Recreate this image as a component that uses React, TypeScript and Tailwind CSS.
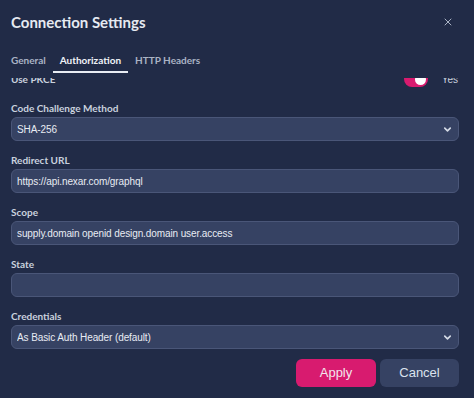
import { useLayoutEffect, useRef } from "react";
import { X, ChevronDown } from "lucide-react";

const sans = { fontFamily: "'Liberation Sans', Arial, sans-serif" };
const label = "block text-[10px] leading-[14px] font-bold text-[#c9d1de] mb-[2px]";
const field =
  "block w-full h-[24px] rounded-[6px] bg-[#364263] border border-[#4a5678] px-[5px] text-[10px] tracking-[-0.1px] text-[#e8ecf3] outline-none";

function TextField({ name, value }: { name: string; value: string }) {
  return (
    <div className="mb-[12px]">
      <label className={label}>{name}</label>
      <input className={field} style={sans} defaultValue={value} />
    </div>
  );
}

function SelectField({ name, value }: { name: string; value: string }) {
  return (
    <div className="mb-[12px]">
      <label className={label}>{name}</label>
      <div className="relative">
        <select className={`${field} appearance-none`} style={sans} defaultValue={value}>
          <option>{value}</option>
        </select>
        <ChevronDown
          size={11}
          strokeWidth={3.5}
          className="absolute right-[6px] top-[7px] text-[#d5dbe6] pointer-events-none"
        />
      </div>
    </div>
  );
}

export default function App() {
  const scrollRef = useRef<HTMLDivElement>(null);

  // the dialog body is scrolled a little, so "Use PKCE" is cut at the top
  useLayoutEffect(() => {
    if (scrollRef.current) scrollRef.current.scrollTop = 9;
  }, []);

  return (
    <div
      className="h-[398px] w-[474px] bg-[#212b47] flex flex-col overflow-hidden"
      style={{ fontFamily: "Lato, 'Liberation Sans', sans-serif" }}
    >
      <div className="flex items-center justify-between h-[24px] mt-[10px] pl-[11px] pr-[20px]">
        <h1 className="text-[15px] font-bold text-[#e6eaf1] leading-[24px]">Connection Settings</h1>
        <X size={12} strokeWidth={2} className="text-[#aab3c5]" />
      </div>

      <div className="flex mt-[14px] mb-[5px] ml-[4px] text-[10px] font-bold">
        <button className="h-[25px] px-[7px] pt-px leading-[16px] border-b-2 border-transparent text-[#aab3c5]">
          General
        </button>
        <button className="h-[25px] px-[7px] pt-px leading-[16px] border-b-2 border-[#e8ecf3] text-[#f0f3f8]">
          Authorization
        </button>
        <button className="h-[25px] px-[7px] pt-px leading-[16px] border-b-2 border-transparent text-[#aab3c5]">
          HTTP Headers
        </button>
      </div>

      <div ref={scrollRef} className="flex-1 overflow-hidden pl-[11px] pr-[15px]">
        <div className="pb-4">
          <div className="flex items-center h-[20px] mb-[12px]">
            <span className="text-[10px] font-bold text-[#c9d1de] flex-1">Use PKCE</span>
            <div className="w-[24px] h-[16px] rounded-full bg-[#d81b6f] flex items-center justify-end pr-[2px]">
              <div className="w-[11px] h-[11px] rounded-full bg-white" />
            </div>
            <span className="ml-[14px] mr-[1px] text-[10px] text-[#c9d1de]" style={sans}>
              Yes
            </span>
          </div>

          <SelectField name="Code Challenge Method" value="SHA-256" />
          <TextField name="Redirect URL" value="https://api.nexar.com/graphql" />
          <TextField name="Scope" value="supply.domain openid design.domain user.access" />
          <TextField name="State" value="" />
          <SelectField name="Credentials" value="As Basic Auth Header (default)" />
        </div>
      </div>

      <div className="flex justify-end gap-[4px] pt-[6px] pb-[11px] pr-[15px]" style={sans}>
        <button className="w-[80px] h-[28px] rounded-[6px] bg-[#d81b6f] text-[13px] text-[#f3e6ee]">
          Apply
        </button>
        <button className="w-[79px] h-[28px] rounded-[6px] bg-[#364263] text-[13px] text-[#dbe2ee]">
          Cancel
        </button>
      </div>
    </div>
  );
}
